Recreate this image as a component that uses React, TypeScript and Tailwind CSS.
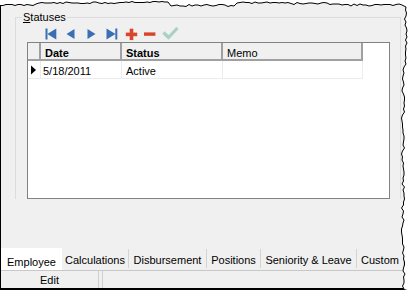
import React from "react";

function makeEdge() {
  let s = 11;
  const rand = () => {
    s = (s * 9301 + 49297) % 233280;
    return s / 233280;
  };
  const base = (x: number) => {
    if (x < 35) return 5;
    if (x < 120) return 3;
    if (x < 170) return 2;
    if (x < 235) return 5.5;
    if (x < 290) return 2.5;
    if (x < 340) return 3.5;
    return 5;
  };
  const top: [number, number][] = [];
  for (let x = 0; x <= 403; x += 3) {
    const y = Math.max(0.5, Math.round((base(x) + (rand() - 0.5) * 1.8) * 2) / 2);
    top.push([x, y]);
  }
  const right: [number, number][] = [];
  let w = 0;
  for (let y = 7; y <= 291; y += 3) {
    w += (rand() - 0.5) * 1.6;
    if (w > 2.5) w = 2.5;
    if (w < -2.5) w = -2.5;
    const x = Math.round((405 + w + (rand() - 0.5) * 2) * 2) / 2;
    right.push([x, y]);
  }
  const all = [...top, ...right];
  const line = all.map((p) => `${p[0]},${p[1]}`).join(" ");
  const fill = `M0,0 L${all.map((p) => `${p[0]},${p[1]}`).join(" L")} L411,291 L411,0 Z`;
  return { line, fill };
}

const EDGE = makeEdge();

function TornEdge() {
  return (
    <svg
      className="absolute left-0 top-0 pointer-events-none"
      width={411}
      height={290}
      viewBox="0 0 411 290"
    >
      <path d={EDGE.fill} fill="#ffffff" />
      <polyline points={EDGE.line} fill="none" stroke="#000" strokeWidth={1} />
    </svg>
  );
}

const BLUE = "#3a6eb5";
const RED = "#d8452c";

function Tool({ children }: { children: React.ReactNode }) {
  return (
    <svg width={20} height={14} viewBox="0 0 20 14" className="shrink-0">
      {children}
    </svg>
  );
}

export default function App() {
  return (
    <div className="relative w-[411px] h-[290px] bg-white overflow-hidden font-['Liberation_Sans',Arial,sans-serif] text-[11px] text-black leading-[13px]">
      <div className="flex flex-col w-[411px] h-[290px] bg-[#f0f0f0] border-l border-b-2 border-black">
        {/* group box */}
        <div className="relative mt-[17px] ml-[14px] w-[386px] h-[182px] border-l border-t border-r border-[#dcdcdc]">
          <div className="absolute top-[-7px] left-[6px] px-[1px] bg-[#f0f0f0]">
            <span className="underline underline-offset-[1px]">S</span>tatuses
          </div>
          {/* toolbar */}
          <div className="flex mt-[9px] ml-[25px] h-[14px]">
            <Tool>
              <rect x={4.5} y={1.5} width={2} height={11} fill={BLUE} />
              <polygon points="6.3,7 15.3,1.5 15.3,12.5" fill={BLUE} />
            </Tool>
            <Tool>
              <polygon points="5.5,7 13.5,2 13.5,12" fill={BLUE} />
            </Tool>
            <Tool>
              <polygon points="6.5,2 14.5,7 6.5,12" fill={BLUE} />
            </Tool>
            <Tool>
              <polygon points="5.5,1.5 14.5,7 5.5,12.5" fill={BLUE} />
              <rect x={14.3} y={1.5} width={2} height={11} fill={BLUE} />
            </Tool>
            <Tool>
              <rect x={4.8} y={5.6} width={11.4} height={3.6} fill={RED} />
              <rect x={8.7} y={1.7} width={3.6} height={11.4} fill={RED} />
            </Tool>
            <Tool>
              <rect x={3} y={5.4} width={11.4} height={3.4} fill={RED} />
            </Tool>
            <Tool>
              <polyline
                points="2.5,5.5 7.5,10.5 16.5,1"
                fill="none"
                stroke="#a9d2c3"
                strokeWidth={3.2}
              />
            </Tool>
          </div>
          {/* grid */}
          <div className="mt-[1px] ml-[11px] w-[363px] h-[157px] border border-[#828282] bg-white">
            <div className="flex h-[18px]">
              <div className="w-[13px] bg-[#f0f0f0] border-r-2 border-b-2 border-[#a0a0a0]" />
              <div className="w-[81px] bg-[#f0f0f0] border-r-2 border-b-2 border-[#a0a0a0] pl-[4px] pt-[4px] font-bold">
                Date
              </div>
              <div className="w-[101px] bg-[#f0f0f0] border-r-2 border-b-2 border-[#a0a0a0] pl-[4px] pt-[4px] font-bold">
                Status
              </div>
              <div className="w-[140px] bg-[#f0f0f0] border-r-2 border-b-2 border-[#a0a0a0] pl-[4px] pt-[4px]">
                Memo
              </div>
            </div>
            <div className="flex h-[18px]">
              <div className="w-[13px] border-r border-b border-[#ececec] flex items-center pl-[3px]">
                <svg width={6} height={10} viewBox="0 0 6 10">
                  <polygon points="0,0.5 5,5 0,9.5" fill="#000" />
                </svg>
              </div>
              <div className="w-[81px] border-r border-b border-[#ececec] pl-[2px] pt-[4px]">5/18/2011</div>
              <div className="w-[101px] border-r border-b border-[#ececec] pl-[4px] pt-[4px]">Active</div>
              <div className="w-[140px] border-r border-b border-[#ececec]" />
            </div>
          </div>
        </div>
        <div className="flex-1" />
        {/* tabs */}
        <div className="flex h-[23px]">
          <div className="w-[61px] mt-[1px] bg-white flex justify-center pt-[8px]">Employee</div>
          <div className="w-[67px] border-r border-[#d4d4d4] my-[2px] flex justify-center pt-[5px]">Calculations</div>
          <div className="w-[78px] border-r border-[#d4d4d4] my-[2px] flex justify-center pt-[5px]">Disbursement</div>
          <div className="w-[54px] border-r border-[#d4d4d4] my-[2px] flex justify-center pt-[5px]">Positions</div>
          <div className="w-[96px] border-r border-[#d4d4d4] my-[2px] flex justify-center pt-[5px] whitespace-nowrap">Seniority &amp; Leave</div>
          <div className="w-[47px] border-r border-[#d4d4d4] my-[2px] flex justify-center pt-[5px]">Custom</div>
        </div>
        <div className="h-px bg-[#c8c8c8]" />
        {/* status bar */}
        <div className="flex h-[17px]">
          <div className="w-[98px] border-r border-[#d0d0d0] flex justify-center pt-[3px]">Edit</div>
          <div className="ml-[3px] flex-1 border-l border-[#d0d0d0]" />
        </div>
      </div>
      <TornEdge />
    </div>
  );
}
